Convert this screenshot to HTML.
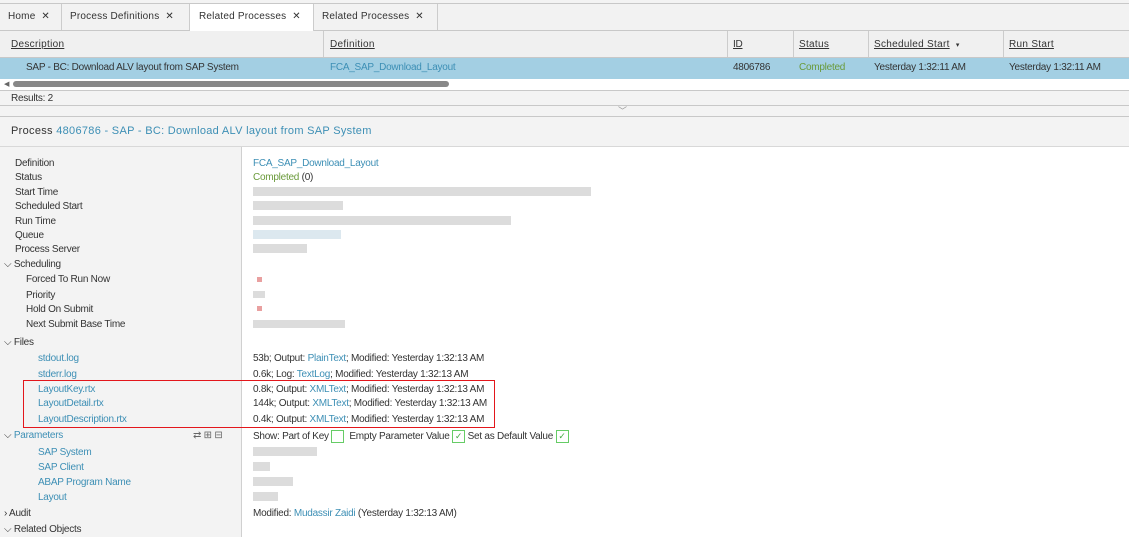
<!DOCTYPE html>
<html><head><meta charset="utf-8"><style>
body{margin:0;width:1129px;height:537px;overflow:hidden;background:#f3f3f3;font-family:"Liberation Sans",sans-serif;font-size:10px;color:#333;position:relative;letter-spacing:-0.25px}
.a{position:absolute;white-space:nowrap}
.l{color:#3d8fb5}
.b{position:absolute;background:#dcdcdc}
</style></head><body>
<div class="a" style="left:0;top:3px;width:1129px;height:1px;background:#c8c8c8"></div>
<div class="a" style="left:0;top:4px;width:1129px;height:26px;background:#f2f2f2;border-bottom:1px solid #c8c8c8"></div>
<div class="a" style="left:0;top:4px;height:26px;width:62px;border-right:1px solid #ccc;line-height:26px;padding-left:8px;box-sizing:border-box;letter-spacing:0.2px">Home &nbsp;✕</div>
<div class="a" style="left:62px;top:4px;height:26px;width:128px;border-right:1px solid #ccc;line-height:26px;padding-left:8px;box-sizing:border-box;letter-spacing:0.2px">Process Definitions &nbsp;✕</div>
<div class="a" style="left:190px;top:4px;height:27px;width:124px;background:#fff;border-right:1px solid #ccc;line-height:26px;padding-left:9px;box-sizing:border-box;letter-spacing:0.2px">Related Processes &nbsp;✕</div>
<div class="a" style="left:314px;top:4px;height:26px;width:124px;border-right:1px solid #ccc;line-height:26px;padding-left:8px;box-sizing:border-box;letter-spacing:0.2px">Related Processes &nbsp;✕</div>
<div class="a" style="left:0;top:31px;width:1129px;height:26px;background:#f0f0f0;border-bottom:1px solid #c8c8c8"></div>
<div class="a" style="left:11px;top:39px;text-decoration:underline;letter-spacing:0.3px">Description</div>
<div class="a" style="left:323px;top:31px;width:1px;height:26px;background:#ccc"></div>
<div class="a" style="left:330px;top:39px;text-decoration:underline;letter-spacing:0.3px">Definition</div>
<div class="a" style="left:727px;top:31px;width:1px;height:26px;background:#ccc"></div>
<div class="a" style="left:733px;top:39px;text-decoration:underline">ID</div>
<div class="a" style="left:793px;top:31px;width:1px;height:26px;background:#ccc"></div>
<div class="a" style="left:799px;top:39px;text-decoration:underline;letter-spacing:0.3px">Status</div>
<div class="a" style="left:868px;top:31px;width:1px;height:26px;background:#ccc"></div>
<div class="a" style="left:874px;top:39px;letter-spacing:0.3px"><u>Scheduled Start</u> &nbsp;<span style="font-size:7px">▾</span></div>
<div class="a" style="left:1003px;top:31px;width:1px;height:26px;background:#ccc"></div>
<div class="a" style="left:1009px;top:39px;text-decoration:underline;letter-spacing:0.3px">Run Start</div>
<div class="a" style="left:0;top:58px;width:1129px;height:21px;background:#a3cfe3"></div>
<div class="a" style="left:26px;top:62px">SAP - BC: Download ALV layout from SAP System</div>
<div class="a l" style="left:330px;top:62px">FCA_SAP_Download_Layout</div>
<div class="a" style="left:733px;top:62px">4806786</div>
<div class="a" style="left:799px;top:62px;color:#6a9a3a">Completed</div>
<div class="a" style="left:874px;top:62px">Yesterday 1:32:11 AM</div>
<div class="a" style="left:1009px;top:62px">Yesterday 1:32:11 AM</div>
<div class="a" style="left:0;top:79px;width:1129px;height:11px;background:#fff;border-bottom:1px solid #c8c8c8"></div>
<div class="a" style="left:4px;top:80px;font-size:7px;color:#666">◀</div>
<div class="a" style="left:13px;top:81px;width:436px;height:6px;border-radius:3px;background:#888"></div>
<div class="a" style="left:11px;top:93px">Results: 2</div>
<div class="a" style="left:0;top:105px;width:1129px;height:1px;background:#c8c8c8"></div>
<div class="a" style="left:618px;top:104px;color:#999;font-size:9px">﹀</div>
<div class="a" style="left:0;top:116px;width:1129px;height:1px;background:#c8c8c8"></div>
<div class="a" style="left:11px;top:125px;font-size:11px;letter-spacing:.3px">Process <span class="l">4806786 - SAP - BC: Download ALV layout from SAP System</span></div>
<div class="a" style="left:0;top:146px;width:1129px;height:1px;background:#d8d8d8"></div>
<div class="a" style="left:241px;top:147px;width:888px;height:390px;background:#fff;border-left:1px solid #d0d0d0"></div>
<div class="a" style="left:15px;top:158px">Definition</div><div class="a l" style="left:253px;top:158px">FCA_SAP_Download_Layout</div>
<div class="a" style="left:15px;top:172px">Status</div><div class="a" style="left:253px;top:172px;color:#6a9a3a">Completed <span style="color:#333">(0)</span></div>
<div class="a" style="left:15px;top:187px">Start Time</div><div class="b" style="left:253px;top:187px;width:338px;height:9px"></div>
<div class="a" style="left:15px;top:201px">Scheduled Start</div><div class="b" style="left:253px;top:201px;width:90px;height:9px"></div>
<div class="a" style="left:15px;top:216px">Run Time</div><div class="b" style="left:253px;top:216px;width:258px;height:9px"></div>
<div class="a" style="left:15px;top:230px">Queue</div><div class="b" style="left:253px;top:230px;width:88px;height:9px;background:#dce8ef"></div>
<div class="a" style="left:15px;top:244px">Process Server</div><div class="b" style="left:253px;top:244px;width:54px;height:9px"></div>
<div class="a" style="left:4px;top:259px">⌵ Scheduling</div>
<div class="a" style="left:26px;top:274px">Forced To Run Now</div><div class="b" style="left:257px;top:277px;width:5px;height:5px;background:#e9a0a0"></div>
<div class="a" style="left:26px;top:290px">Priority</div><div class="b" style="left:253px;top:291px;width:12px;height:7px"></div>
<div class="a" style="left:26px;top:304px">Hold On Submit</div><div class="b" style="left:257px;top:306px;width:5px;height:5px;background:#e9a0a0"></div>
<div class="a" style="left:26px;top:319px">Next Submit Base Time</div><div class="b" style="left:253px;top:320px;width:92px;height:8px"></div>
<div class="a" style="left:4px;top:337px">⌵ Files</div>
<div class="a l" style="left:38px;top:353px">stdout.log</div><div class="a" style="left:253px;top:353px">53b; Output: <span class="l">PlainText</span>; Modified: Yesterday 1:32:13 AM</div>
<div class="a l" style="left:38px;top:369px">stderr.log</div><div class="a" style="left:253px;top:369px">0.6k; Log: <span class="l">TextLog</span>; Modified: Yesterday 1:32:13 AM</div>
<div class="a l" style="left:38px;top:384px">LayoutKey.rtx</div><div class="a" style="left:253px;top:384px">0.8k; Output: <span class="l">XMLText</span>; Modified: Yesterday 1:32:13 AM</div>
<div class="a l" style="left:38px;top:398px">LayoutDetail.rtx</div><div class="a" style="left:253px;top:398px">144k; Output: <span class="l">XMLText</span>; Modified: Yesterday 1:32:13 AM</div>
<div class="a l" style="left:38px;top:414px">LayoutDescription.rtx</div><div class="a" style="left:253px;top:414px">0.4k; Output: <span class="l">XMLText</span>; Modified: Yesterday 1:32:13 AM</div>
<div class="a" style="left:23px;top:380px;width:470px;height:46px;border:1px solid #e3161b"></div>
<div class="a" style="left:4px;top:430px">⌵ <span class="l">Parameters</span></div>
<div class="a" style="left:193px;top:430px;color:#666">⇄ ⊞ ⊟</div>
<div class="a" style="left:253px;top:430px">Show: Part of Key <span style="display:inline-block;width:11px;height:11px;border:1px solid #6c6;vertical-align:middle"></span> &nbsp;Empty Parameter Value <span style="display:inline-block;width:11px;height:11px;border:1px solid #6c6;vertical-align:middle;color:#4a4;font-size:9px;line-height:11px;text-align:center">✓</span> Set as Default Value <span style="display:inline-block;width:11px;height:11px;border:1px solid #6c6;vertical-align:middle;color:#4a4;font-size:9px;line-height:11px;text-align:center">✓</span></div>
<div class="a l" style="left:38px;top:447px">SAP System</div><div class="b" style="left:253px;top:447px;width:64px;height:9px"></div>
<div class="a l" style="left:38px;top:462px">SAP Client</div><div class="b" style="left:253px;top:462px;width:17px;height:9px"></div>
<div class="a l" style="left:38px;top:477px">ABAP Program Name</div><div class="b" style="left:253px;top:477px;width:40px;height:9px"></div>
<div class="a l" style="left:38px;top:492px">Layout</div><div class="b" style="left:253px;top:492px;width:25px;height:9px"></div>
<div class="a" style="left:4px;top:508px">› Audit</div><div class="a" style="left:253px;top:508px">Modified: <span class="l">Mudassir Zaidi</span> (Yesterday 1:32:13 AM)</div>
<div class="a" style="left:4px;top:524px">⌵ Related Objects</div>
</body></html>
